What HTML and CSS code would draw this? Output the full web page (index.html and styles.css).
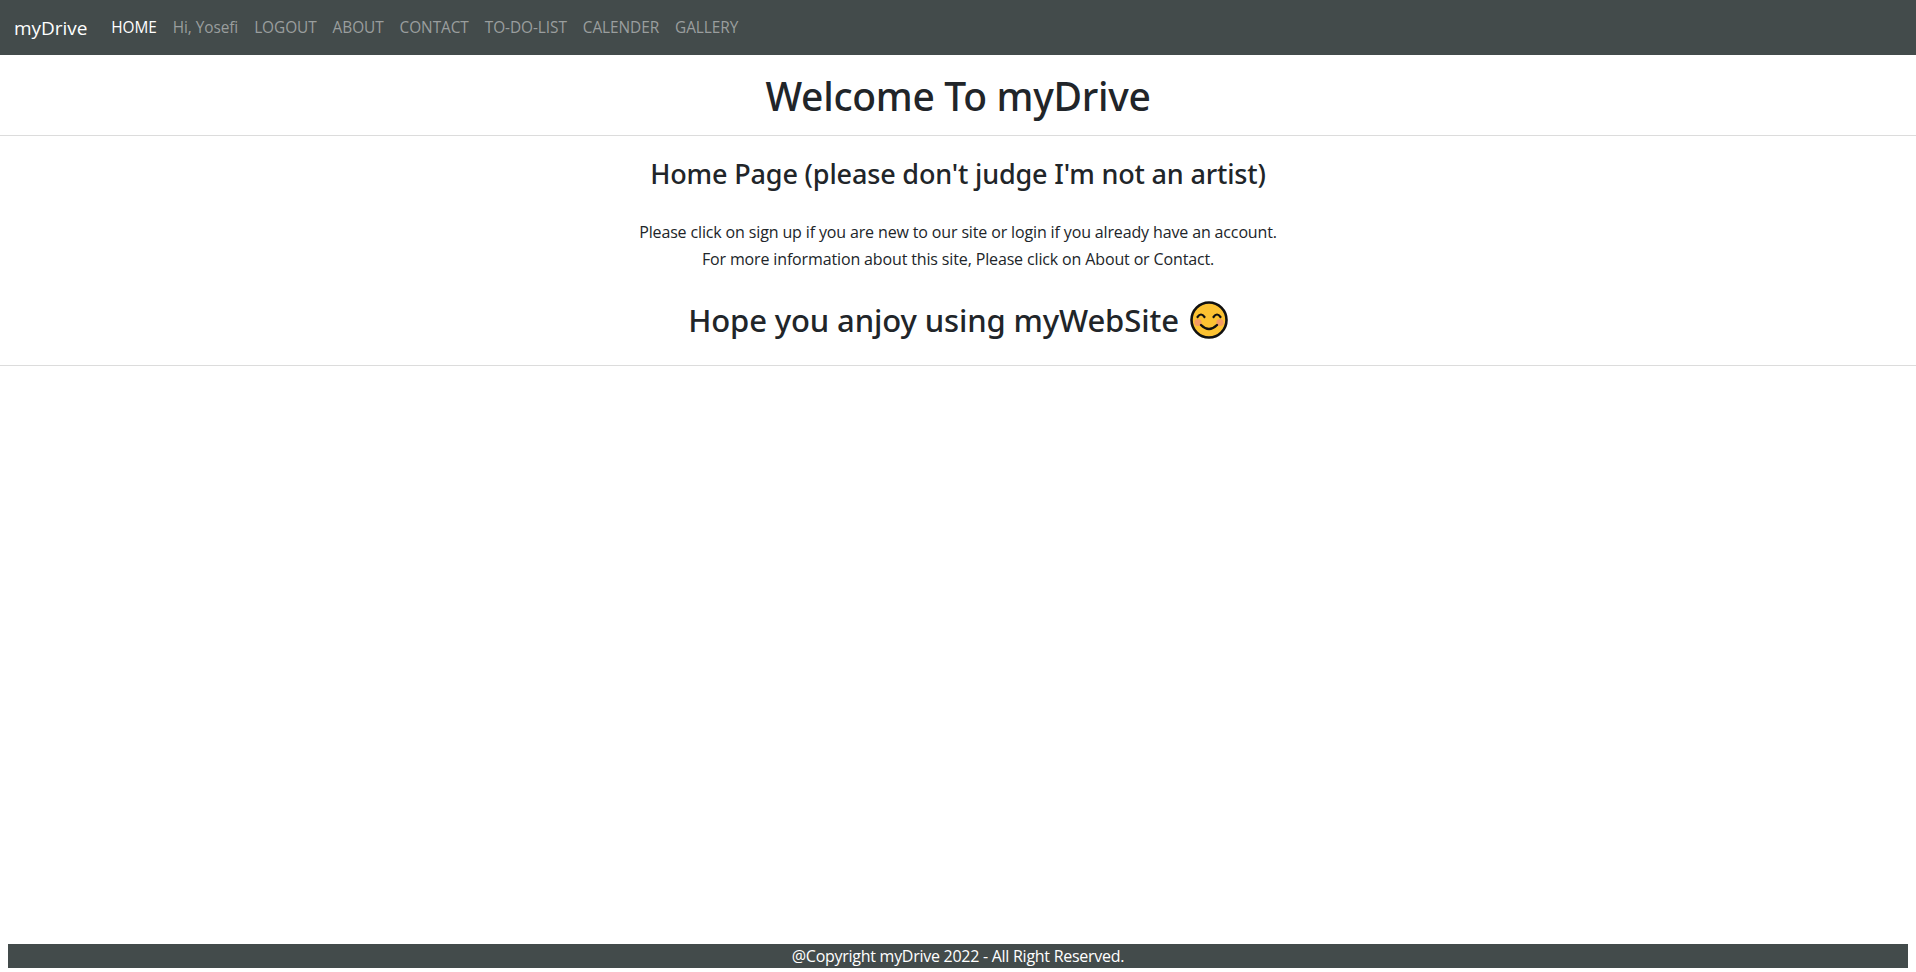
FILE: index.html
```html
<!DOCTYPE html>
<html>
    <head>
        <title>myDrive</title>
        <link rel="stylesheet" href="styles.css">
    </head>
    <body>
        <nav class="navbar">
            <a class="brand" href="#">myDrive</a>
            <a class="nav-link active" href="#">HOME</a>
            <a class="nav-link" href="#">Hi, Yosefi</a>
            <a class="nav-link" href="#">LOGOUT</a>
            <a class="nav-link" href="#">ABOUT</a>
            <a class="nav-link" href="#">CONTACT</a>
            <a class="nav-link" href="#">TO-DO-LIST</a>
            <a class="nav-link" href="#">CALENDER</a>
            <a class="nav-link" href="#">GALLERY</a>
        </nav>
        <main class="content">
            <h1 class="title">Welcome To myDrive</h1>
            <hr class="rule">
            <h2 class="subtitle">Home Page (please don't judge I'm not an artist)</h2>
            <p class="intro">Please click on sign up if you are new to our site or login if you already have an account.</p>
            <p class="intro">For more information about this site, Please click on About or Contact.</p>
            <h2 class="hope">Hope you anjoy using myWebSite
                <svg class="smile" viewBox="0 0 38 38" width="38" height="38">
                    <circle cx="19" cy="19" r="17.5" fill="#fcc232" stroke="#111" stroke-width="2.6"/>
                    <circle cx="8" cy="21.5" r="3.6" fill="#f59a62"/>
                    <circle cx="30" cy="21.5" r="3.6" fill="#f59a62"/>
                    <path d="M7.5 16 Q11 11 14.5 16 M23.5 16 Q27 11 30.5 16" fill="none" stroke="#111" stroke-width="2.2" stroke-linecap="round"/>
                    <path d="M11 24 Q19 32 27 24" fill="none" stroke="#111" stroke-width="2.4" stroke-linecap="round"/>
                </svg>
            </h2>
            <hr class="rule">
        </main>
        <footer class="footer">@Copyright myDrive 2022 - All Right Reserved.</footer>
    </body>
</html>
```
FILE: styles.css
```css
* {
    box-sizing: border-box;
}
body {
    margin: 0;
    min-height: 100vh;
    display: flex;
    flex-direction: column;
    font-family: "Open Sans", "Noto Sans", sans-serif;
    color: #212529;
    background: white;
}
.navbar {
    height: 55px;
    display: flex;
    align-items: center;
    padding: 0 8px 0 14px;
    background: #434b4b;
}
.brand {
    color: white;
    font-size: 19px;
    letter-spacing: -0.05px;
    margin-right: 24px;
    text-decoration: none;
}
.nav-link {
    color: #9a9e9e;
    font-size: 15.4px;
    letter-spacing: -0.07px;
    margin-right: 16px;
    text-decoration: none;
}
.nav-link.active {
    color: white;
}
.content {
    flex: 1;
    text-align: center;
}
.title {
    margin: 17px 0 0;
    font-family: "Noto Sans", "Open Sans", sans-serif;
    font-size: 39px;
    line-height: 47px;
    font-weight: 500;
    letter-spacing: -0.3px;
}
.rule {
    margin: 16px 0 0;
    border: 0;
    border-top: 1px solid #dcdcdc;
}
.subtitle {
    margin: 21px 0 28px;
    font-family: "Noto Sans", "Open Sans", sans-serif;
    font-size: 27px;
    line-height: 34px;
    font-weight: 500;
    letter-spacing: -0.16px;
}
.intro {
    margin: 0;
    font-size: 16px;
    line-height: 27px;
    letter-spacing: -0.14px;
}
.hope {
    margin: 25px 0 0;
    font-family: "Noto Sans", "Open Sans", sans-serif;
    font-size: 31px;
    line-height: 44px;
    font-weight: 500;
    letter-spacing: -0.12px;
    display: flex;
    justify-content: center;
    align-items: center;
    gap: 11px;
}
.hope + .rule {
    margin-top: 23px;
}
.footer {
    margin: 0 8px 4px;
    height: 24px;
    line-height: 24px;
    background: #434b4b;
    color: white;
    font-size: 16px;
    letter-spacing: -0.27px;
    text-align: center;
}
```
